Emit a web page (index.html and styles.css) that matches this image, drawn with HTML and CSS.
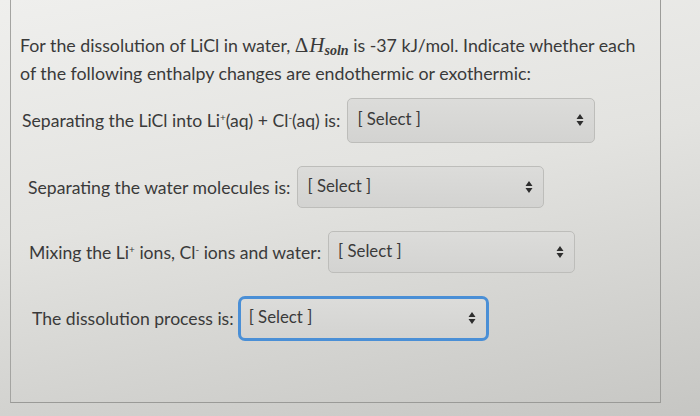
FILE: index.html
```html
<!DOCTYPE html>
<html lang="en">
<head>
    <meta charset="UTF-8">
    <title>Dissolution of LiCl</title>
    <link rel="stylesheet" href="styles.css">
</head>
<body>
    <div class="panel">
        <p class="prompt">
            <span class="line">For the dissolution of LiCl in water, <span class="math">&Delta;<i>H</i><sub>soln</sub></span> is -37 kJ/mol. Indicate whether each</span>
            <span class="line">of the following enthalpy changes are endothermic or exothermic:</span>
        </p>

        <div class="row row-1">
            <span class="label">Separating the LiCl into Li<sup>+</sup>(aq) + Cl<sup>-</sup>(aq) is:</span>
            <div class="select tall">
                <span>[ Select ]</span>
                <svg class="arrows" width="8" height="14" viewBox="0 0 8 14"><path d="M4 1 L7.5 6 L0.5 6 Z M4 13 L7.5 8 L0.5 8 Z" fill="#2e2e2e"/></svg>
            </div>
        </div>

        <div class="row row-2">
            <span class="label">Separating the water molecules is:</span>
            <div class="select">
                <span>[ Select ]</span>
                <svg class="arrows" width="8" height="14" viewBox="0 0 8 14"><path d="M4 1 L7.5 6 L0.5 6 Z M4 13 L7.5 8 L0.5 8 Z" fill="#2e2e2e"/></svg>
            </div>
        </div>

        <div class="row row-3">
            <span class="label">Mixing the Li<sup>+</sup> ions, Cl<sup>-</sup> ions and water:</span>
            <div class="select">
                <span>[ Select ]</span>
                <svg class="arrows" width="8" height="14" viewBox="0 0 8 14"><path d="M4 1 L7.5 6 L0.5 6 Z M4 13 L7.5 8 L0.5 8 Z" fill="#2e2e2e"/></svg>
            </div>
        </div>

        <div class="row row-4">
            <span class="label">The dissolution process is:</span>
            <div class="select focused">
                <span>[ Select ]</span>
                <svg class="arrows" width="8" height="14" viewBox="0 0 8 14"><path d="M4 1 L7.5 6 L0.5 6 Z M4 13 L7.5 8 L0.5 8 Z" fill="#2e2e2e"/></svg>
            </div>
        </div>
    </div>
</body>
</html>
```

FILE: styles.css
```css
/* General styles */
body {
    margin: 0;
    height: 416px;
    overflow: hidden;
    font-family: Lato, "Open Sans", Arial, sans-serif;
    color: #3a3a3a;
    background: linear-gradient(170deg, #efefed 0%, #e3e3e0 45%, #c6c6c3 100%);
}

.panel {
    margin-left: 10px;
    width: 651px;
    height: 403px;
    box-sizing: border-box;
    border-left: 1px solid #a4a4a1;
    border-right: 1px solid #9c9c99;
    border-bottom: 1px solid #9a9a97;
    padding-top: 31px;
}

.prompt {
    margin: 0 0 0 9px;
    font-size: 17.8px;
    line-height: 28px;
    width: 640px;
}

.prompt .line {
    display: block;
    white-space: nowrap;
}

/* Delta H soln, set in a math serif */
.math {
    font-family: "Liberation Serif", serif;
    font-size: 21px;
    line-height: 1;
}

.math i {
    font-style: italic;
    margin-left: 1px;
}

.math sub {
    font-style: italic;
    font-weight: bold;
    font-size: 14px;
    line-height: 1;
    vertical-align: -3px;
}

/* Rows with a label and a dropdown */
.row {
    display: flex;
    align-items: center;
    gap: 7px;
    font-size: 17.6px;
}

.row sup {
    font-size: 10px;
    line-height: 1;
    vertical-align: 6px;
}

.row-1 { margin: 11px 0 0 11px; }
.row-2 { margin: 23px 0 0 17px; }
.row-3 { margin: 23px 0 0 18px; }
.row-4 { margin: 23px 0 0 21px; gap: 4px; }

.select {
    display: flex;
    align-items: center;
    width: 247px;
    height: 42px;
    box-sizing: border-box;
    padding: 0 10px 4px 9px;
    background: linear-gradient(180deg, #dcdcda, #d3d3d1);
    border: 1px solid #bdbdba;
    border-radius: 5px;
    font-size: 16.8px;
    color: #3a3a3a;
}

.select.tall {
    height: 45px;
    width: 248px;
}

.select.focused {
    width: 251px;
    height: 45px;
    border: 3px solid #4a8fd6;
    border-radius: 7px;
    padding-left: 8px;
}

.select .arrows {
    margin-left: auto;
    margin-top: 3px;
}
```
